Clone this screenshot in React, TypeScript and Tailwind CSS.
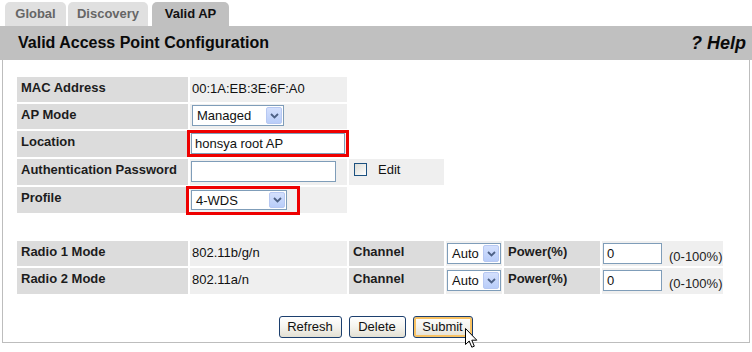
import React from "react";

const FONT = { fontFamily: '"Liberation Sans", Arial, sans-serif' };

function Chevron() {
  return (
    <svg width="9" height="6" viewBox="0 0 9 6">
      <path d="M1 1 L4.5 4.5 L8 1" fill="none" stroke="#4d6185" strokeWidth="1.8" />
    </svg>
  );
}

function Select({ w, h, text }: { w: number; h: number; text: string }) {
  return (
    <div
      className="relative flex items-center border border-[#7f9db9] bg-white text-[13px] text-[#111] pl-[4px]"
      style={{ width: w, height: h }}
    >
      <span className="leading-[15px]">{text}</span>
      <div className="absolute right-[1px] top-[1px] bottom-[1px] w-[16px] flex items-center justify-center rounded-[2px] border border-[#b7c8f2] bg-linear-to-b from-[#d4e0fd] to-[#b9cdf9]">
        <Chevron />
      </div>
    </div>
  );
}

function Input({ w, h, text }: { w: number; h: number; text?: string }) {
  return (
    <div
      className="flex items-center border border-[#7f9db9] bg-white text-[13px] text-[#111] pl-[3px] shrink-0"
      style={{ width: w, height: h }}
    >
      <span className="leading-[15px]">{text}</span>
    </div>
  );
}

function Label({ w, children }: { w: number; children: React.ReactNode }) {
  return (
    <div
      className="bg-[#dcdcdc] text-[13px] leading-[15px] font-bold text-[#1c1c1c] pl-[4px] pt-[3px] shrink-0"
      style={{ width: w }}
    >
      {children}
    </div>
  );
}

function Value({ w, children, cls = "" }: { w: number; children?: React.ReactNode; cls?: string }) {
  return (
    <div
      className={"bg-[#efefef] text-[13px] leading-[15px] text-[#111] shrink-0 relative " + cls}
      style={{ width: w }}
    >
      {children}
    </div>
  );
}

function XPButton({ w, label, hover }: { w: number; label: string; hover?: boolean }) {
  return (
    <div
      className={
        "h-[22px] flex items-center justify-center rounded-[3px] border border-[#1c3f6e] bg-linear-to-b from-[#ffffff] via-[#f4f3ee] to-[#e3e0d3] text-[13px] text-[#111] " +
        (hover ? "shadow-[inset_0_0_0_2px_#f8c263]" : "")
      }
      style={{ width: w }}
    >
      {label}
    </div>
  );
}

export default function App() {
  return (
    <div className="w-[752px] h-[352px] bg-white relative overflow-hidden" style={FONT}>
      {/* tabs */}
      <div className="h-[26px] flex items-end pl-[5px] gap-[2px]">
        <div className="w-[61px] h-[24px] rounded-t-[5px] bg-[#e0e0e0] flex items-center justify-center text-[13px] font-bold text-[#666]">
          Global
        </div>
        <div className="w-[80px] h-[24px] rounded-t-[5px] bg-[#e0e0e0] flex items-center justify-center text-[13px] font-bold text-[#666]">
          Discovery
        </div>
        <div className="ml-[2px] w-[77px] h-[24px] rounded-t-[5px] bg-[#c0c0c0] flex items-center justify-center text-[13px] font-bold text-[#111]">
          Valid AP
        </div>
      </div>

      {/* header */}
      <div className="h-[34px] bg-[#c0c0c0] flex items-center justify-between pl-[18px] pr-[6px]">
        <span className="text-[16px] font-bold text-[#0a0a0a]">Valid Access Point Configuration</span>
        <span className="text-[18px] font-bold italic text-[#0a0a0a]">? Help</span>
      </div>

      {/* content */}
      <div className="mx-[2px] w-[748px] h-[283px] border-l border-r border-b border-[#bdbdbd] pl-[14px] pt-[17px]">
        <div className="flex flex-col gap-[2px]">
          <div className="flex gap-[2px] h-[25px]">
            <Label w={171}>MAC Address</Label>
            <Value w={157} cls="pl-[2px] pt-[4px]">00:1A:EB:3E:6F:A0</Value>
          </div>
          <div className="flex gap-[2px] h-[25px]">
            <Label w={171}>AP Mode</Label>
            <Value w={157} cls="pl-[2px] pt-[1px]">
              <Select w={92} h={21} text="Managed" />
            </Value>
          </div>
          <div className="flex gap-[2px] h-[26px]">
            <Label w={171}>Location</Label>
            <Value w={157} cls="pl-[1px] pt-[2px]">
              <Input w={154} h={21} text="honsya root AP" />
              <div className="absolute left-[-3px] top-[-1px] w-[162px] h-[27px] border-[3px] border-[#ee0000]" />
            </Value>
          </div>
          <div className="flex gap-[2px] h-[26px]">
            <Label w={171}>Authentication Password</Label>
            <Value w={157} cls="pl-[1px] pt-[2px]">
              <Input w={145} h={21} />
            </Value>
            <Value w={95} cls="flex items-start pl-[5px] pt-[4px]">
              <div className="w-[13px] h-[13px] border border-[#1c5180] bg-linear-to-br from-[#dcdcd6] to-[#ffffff]" />
              <span className="ml-[11px] mt-[-1px]">Edit</span>
            </Value>
          </div>
          <div className="flex gap-[2px] h-[26px]">
            <Label w={171}>Profile</Label>
            <Value w={157} cls="pl-[1px] pt-[3px]">
              <Select w={96} h={20} text="4-WDS" />
              <div className="absolute left-[-4px] top-[-1px] w-[114px] h-[29px] border-[3px] border-[#ee0000]" />
            </Value>
          </div>
        </div>

        <div className="flex flex-col gap-[2px] mt-[28px]">
          {[
            { l: "Radio 1 Mode", v: "802.11b/g/n", h: 25 },
            { l: "Radio 2 Mode", v: "802.11a/n", h: 26 },
          ].map((r) => (
            <div key={r.l} className="flex gap-[2px]" style={{ height: r.h }}>
              <Label w={171}>{r.l}</Label>
              <Value w={157} cls="pl-[2px] pt-[4px]">{r.v}</Value>
              <Label w={95}>Channel</Label>
              <Value w={56} cls="pl-[1px] pt-[2px]">
                <Select w={54} h={21} text="Auto" />
              </Value>
              <Label w={96}>Power(%)</Label>
              <Value w={121} cls="flex items-start pl-[1px] pt-[2px]">
                <Input w={59} h={21} text="0" />
                <span className="ml-[7px] mt-[6px] text-[#222] whitespace-nowrap">(0-100%)</span>
              </Value>
            </div>
          ))}
        </div>

        <div className="mt-[22px] flex justify-center gap-[7px] pr-[15px]">
          <XPButton w={63} label="Refresh" />
          <XPButton w={57} label="Delete" />
          <XPButton w={60} label="Submit" hover />
        </div>
      </div>

      {/* mouse cursor */}
      <svg className="absolute left-[465px] top-[328px]" width="14" height="22" viewBox="0 0 14 22">
        <path
          d="M0.5 0.5 L0.5 16.5 L4.2 13 L6.8 19.2 L9.3 18.2 L6.8 12.2 L11.8 12.2 Z"
          fill="#fff"
          stroke="#000"
          strokeWidth="1"
          strokeLinejoin="miter"
        />
      </svg>
    </div>
  );
}
